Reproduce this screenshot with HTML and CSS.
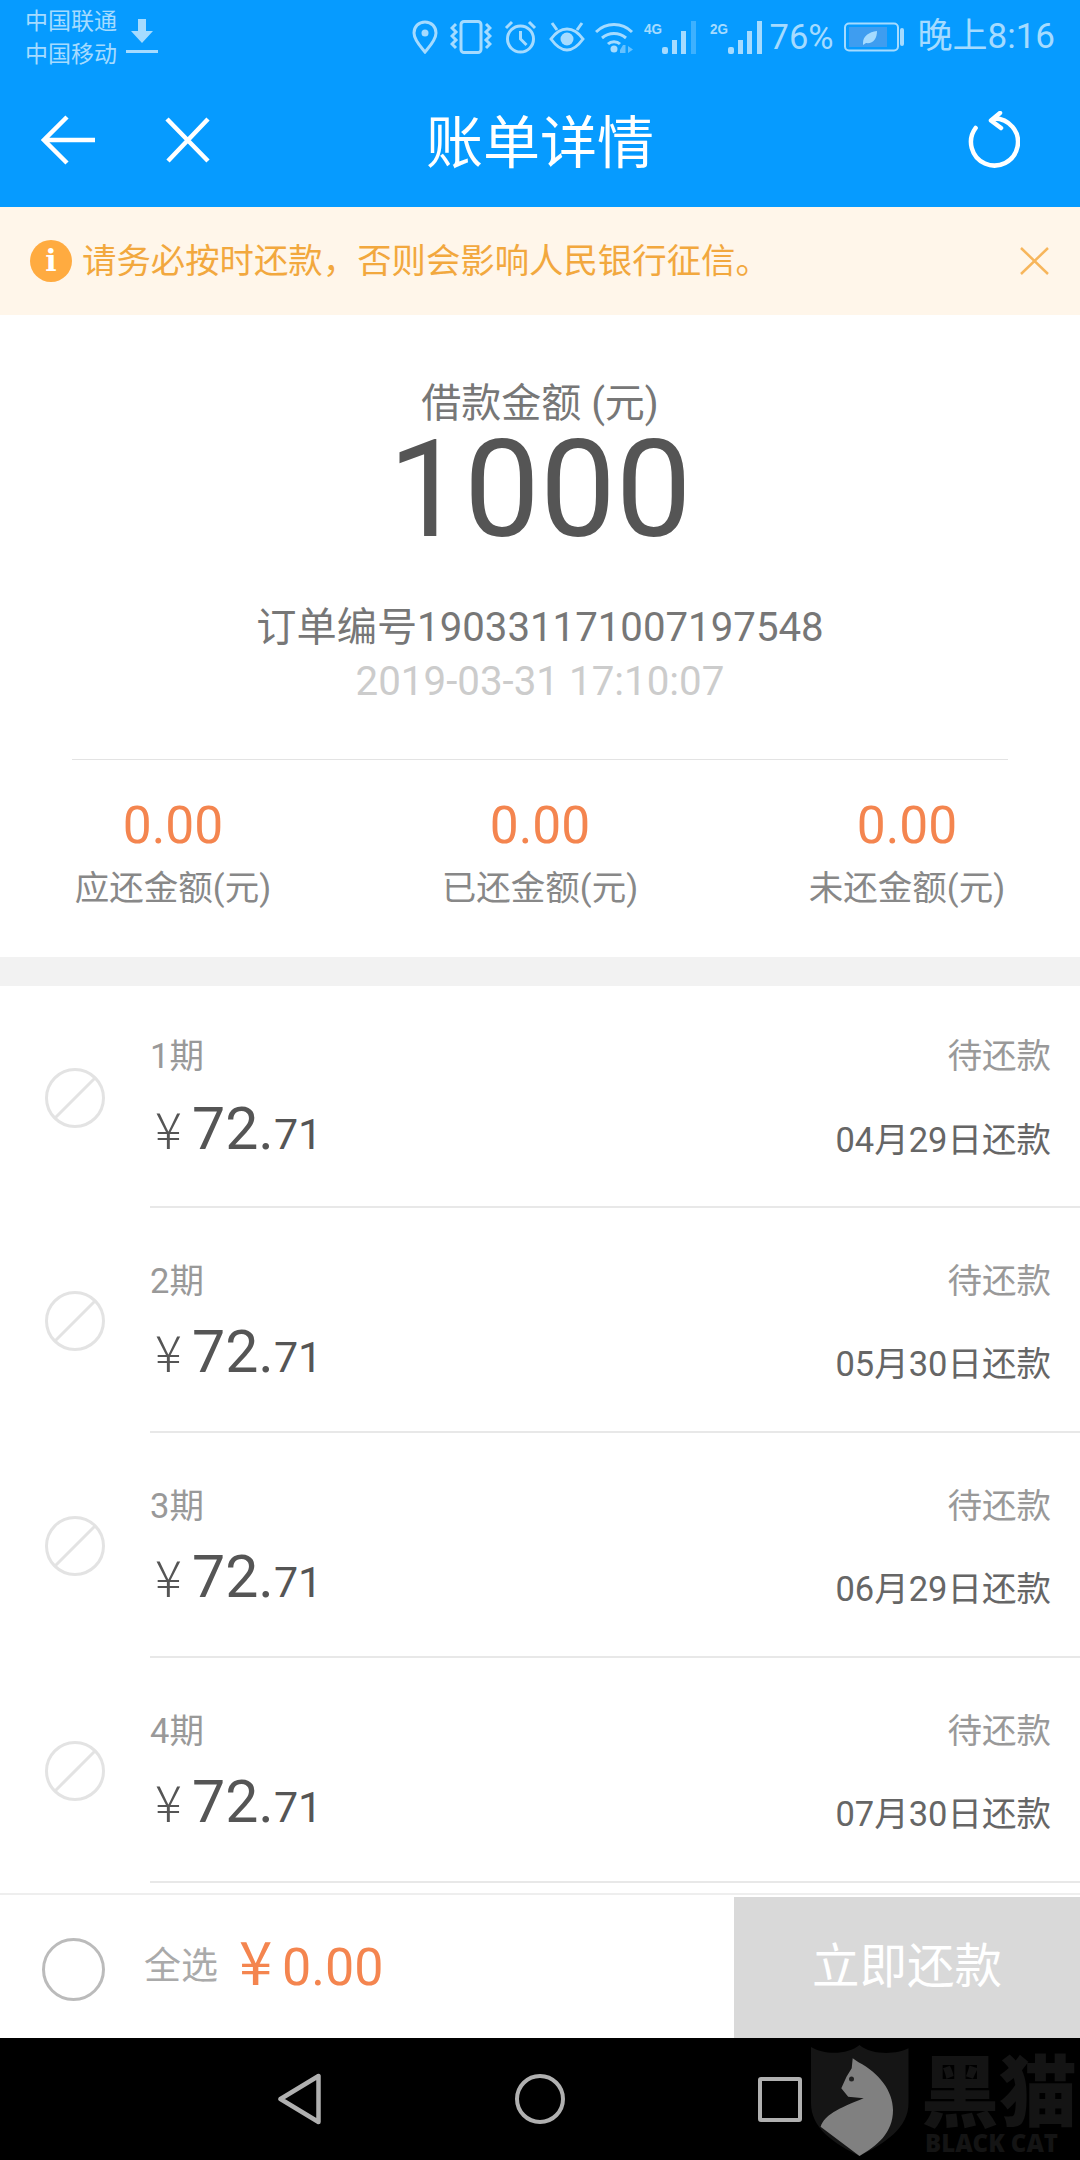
FILE: index.html
```html
<!DOCTYPE html>
<html lang="zh-CN">
<head>
<meta charset="utf-8">
<title>账单详情</title>
<link rel="stylesheet" href="styles.css">
</head>
<body>
<div class="page">
  <header class="top">
    <div class="status">
      <div class="carriers"><span>中国联通</span><span>中国移动</span></div>
      <svg class="ic-dl" viewBox="0 0 32 36"><path class="fill" d="M12 0h8v12h7L16 24 5 12h7z"/><rect class="fill" x="0" y="31" width="32" height="3"/></svg>
      <div class="status-right">
        <svg class="ic-pin" viewBox="0 0 26 34"><path class="line" d="M13 2C6.500 2 2 6.800 2 13c0 7 7 14 11 19 4-5 11-12 11-19C24 6.800 19.500 2 13 2z"/><circle class="fill" cx="13" cy="13" r="3.500"/></svg>
        <svg class="ic-vib" viewBox="0 0 42 34"><rect class="line" x="11" y="1.500" width="20" height="31" rx="3"/><path class="line" d="M6 4L2 8l4 4-4 4 4 4-4 4 4 4M36 4l4 4-4 4 4 4-4 4 4 4-4 4"/></svg>
        <svg class="ic-alarm" viewBox="0 0 33 34"><circle class="line" cx="16.500" cy="19" r="13"/><path class="line" d="M16.500 11v8l6 6M2 8l6-6M31 8l-6-6"/></svg>
        <svg class="ic-eye" viewBox="0 0 36 32"><path class="line" d="M2 18c5-7 10-10 16-10s11 3 16 10c-5 7-10 11-16 11S7 25 2 18z"/><circle class="fill" cx="18" cy="18" r="6.500"/><path class="line" d="M3 2l5 7M33 2l-5 7"/></svg>
        <svg class="ic-wifi" viewBox="0 0 39 32"><path class="line" d="M1 11c10-10 26-10 36 0M7 17c7-6 17-6 24 0M13 23c3-3 9-3 12 0"/><circle class="fill" cx="19" cy="28" r="3.500"/><path class="fill" d="M28 24h2.500v8H25v-3zM33 25l5 3.500-5 3.500z" opacity="0.6"/></svg>
        <svg class="ic-sig" viewBox="0 0 53 34"><text class="sig-label" x="0" y="14" textLength="18" lengthAdjust="spacingAndGlyphs">4G</text><rect class="fill" x="18" y="27" width="6" height="7" rx="2"/><rect class="fill" x="28" y="20" width="5" height="14"/><rect class="fill" x="37" y="11" width="5" height="23"/><rect class="fill dim" x="47" y="1" width="5" height="33"/></svg>
        <svg class="ic-sig" viewBox="0 0 53 34"><text class="sig-label" x="0" y="14" textLength="18" lengthAdjust="spacingAndGlyphs">2G</text><rect class="fill" x="18" y="27" width="6" height="7" rx="2"/><rect class="fill" x="28" y="20" width="5" height="14"/><rect class="fill" x="37" y="11" width="5" height="23"/><rect class="fill" x="47" y="1" width="5" height="33"/></svg>
        <span class="pct">76%</span>
        <svg class="ic-bat" viewBox="0 0 60 30"><rect class="line thin" x="1" y="1.500" width="53" height="27" rx="4"/><rect class="bat-level" x="5" y="5" width="38" height="20"/><path class="fill" d="M19 21c0-7 6-11 14-12 0 8-4 13-11 12l-3 2z"/><rect class="fill" x="56" y="6" width="4" height="18" rx="2"/></svg>
        <span class="clock">晚上8:16</span>
      </div>
    </div>
    <div class="toolbar">
      <div class="tool-left">
        <svg class="ic-back" viewBox="0 0 54 50"><path d="M54 25H3M26 2L3 25l23 23"/></svg>
        <svg class="ic-close" viewBox="0 0 45 46"><path d="M2 2l41 42M43 2L3 44"/></svg>
      </div>
      <h1 class="title">账单详情</h1>
      <div class="tool-right">
        <svg class="ic-reload" viewBox="0 0 52 58"><path d="M7.600 17A23.500 23.500 0 1 0 26 7.500M32 2l-9 7.500L33 17"/></svg>
      </div>
    </div>
  </header>

  <div class="notice">
    <span class="notice-dot">i</span>
    <span class="notice-text">请务必按时还款，否则会影响人民银行征信。</span>
    <svg class="ic-nclose" viewBox="0 0 29 28"><path d="M1 1l27 26M28 1L1 27"/></svg>
  </div>

  <section class="summary">
    <div class="sum-label">借款金额 (元)</div>
    <div class="sum-amount">1000</div>
    <div class="sum-order">订单编号190331171007197548</div>
    <div class="sum-date">2019-03-31 17:10:07</div>
    <div class="sum-rule"></div>
    <div class="stats">
      <div class="stat"><div class="stat-val">0.00</div><div class="stat-label">应还金额(元)</div></div>
      <div class="stat"><div class="stat-val">0.00</div><div class="stat-label">已还金额(元)</div></div>
      <div class="stat"><div class="stat-val">0.00</div><div class="stat-label">未还金额(元)</div></div>
    </div>
  </section>

  <div class="band"></div>

  <section class="list">
    <article class="row">
      <svg class="ic-ban" viewBox="0 0 60 60"><circle cx="30" cy="30" r="28.500"/><path d="M10 50L50 10"/></svg>
      <div class="row-body">
        <div class="col"><div class="period">1期</div><div class="amount"><span class="yen">¥</span>72.<span class="cents">71</span></div></div>
        <div class="col col-r"><div class="state">待还款</div><div class="due">04月29日还款</div></div>
      </div>
    </article>
    <article class="row">
      <svg class="ic-ban" viewBox="0 0 60 60"><circle cx="30" cy="30" r="28.500"/><path d="M10 50L50 10"/></svg>
      <div class="row-body">
        <div class="col"><div class="period">2期</div><div class="amount"><span class="yen">¥</span>72.<span class="cents">71</span></div></div>
        <div class="col col-r"><div class="state">待还款</div><div class="due">05月30日还款</div></div>
      </div>
    </article>
    <article class="row">
      <svg class="ic-ban" viewBox="0 0 60 60"><circle cx="30" cy="30" r="28.500"/><path d="M10 50L50 10"/></svg>
      <div class="row-body">
        <div class="col"><div class="period">3期</div><div class="amount"><span class="yen">¥</span>72.<span class="cents">71</span></div></div>
        <div class="col col-r"><div class="state">待还款</div><div class="due">06月29日还款</div></div>
      </div>
    </article>
    <article class="row">
      <svg class="ic-ban" viewBox="0 0 60 60"><circle cx="30" cy="30" r="28.500"/><path d="M10 50L50 10"/></svg>
      <div class="row-body">
        <div class="col"><div class="period">4期</div><div class="amount"><span class="yen">¥</span>72.<span class="cents">71</span></div></div>
        <div class="col col-r"><div class="state">待还款</div><div class="due">07月30日还款</div></div>
      </div>
    </article>
  </section>

  <footer class="bar">
    <span class="radio"></span>
    <span class="all">全选</span>
    <span class="total"><span class="total-yen">¥</span>0.00</span>
    <button class="pay">立即还款</button>
  </footer>

  <nav class="sysnav">
    <svg class="ic-tri" viewBox="0 0 44 52"><path d="M2.500 26L40.500 3v46z"/></svg>
    <span class="nav-circle"></span>
    <span class="nav-square"></span>
    <div class="mark">
      <svg class="mark-shield" viewBox="0 0 100 115"><path class="shield" d="M2 4C15 12 39 12 50.500 2 62 12 87 12 99.500 5.300V60c0 25-23 40-49 53C24 100 2 85 2 60z"/><path class="cat" d="M43.700 15.300l5.800 4C70 30 84 48 84 67c0 23-16 36-33.500 46L11.600 83.700C16 72 28 66 54.700 55.300l-15.500-1.600-6.900-8.400 5.200-11.600 5.200-8.400z"/><circle class="cat-eye" cx="42.500" cy="36" r="2.500"/></svg>
      <div class="mark-text"><span class="mark-cn">黑猫</span><span class="mark-en">BLACK CAT</span></div>
    </div>
  </nav>
</div>
</body>
</html>
```

FILE: styles.css
```css
* { box-sizing: border-box; }
html, body { margin: 0; padding: 0; background: #fff; }
body { font-family: Roboto, "Noto Sans CJK SC", sans-serif; }
.page { width: 1080px; height: 2160px; display: flex; flex-direction: column; overflow: hidden; }

/* top */
.top { background: #069bff; height: 207px; flex: none; display: flex; flex-direction: column; }
.status { height: 73px; display: flex; align-items: flex-start; padding: 5px 0 0 25px; color: #a5dbff; }
.carriers { display: flex; flex-direction: column; font-size: 23px; line-height: 33px; width: 101px; white-space: nowrap; }
.fill { fill: #a5dbff; }
.fill.dim { opacity: .35; }
.line { fill: none; stroke: #a5dbff; stroke-width: 3; }
.line.thin { stroke-width: 2; }
.ic-dl { width: 32px; height: 36px; margin: 14px 0 0 0; }
.status-right { margin-left: auto; display: flex; align-items: center; height: 64px; padding-right: 25px; }
.status-right svg { display: block; flex: none; }
.ic-pin { width: 26px; height: 34px; }
.ic-vib { width: 42px; height: 34px; margin-left: 12px; }
.ic-alarm { width: 33px; height: 34px; margin-left: 12px; }
.ic-eye { width: 36px; height: 32px; margin-left: 12px; }
.ic-wifi { width: 39px; height: 32px; margin-left: 10px; }
.ic-sig { width: 53px; height: 34px; margin-left: 10px; }
.ic-sig + .ic-sig { margin-left: 13px; }
.sig-label { font-family: "Liberation Sans", sans-serif; font-size: 15px; font-weight: 700; fill: #a5dbff; }
.pct { font-size: 34.500px; line-height: 40px; margin-left: 7px; width: 63px; white-space: nowrap; }
.ic-bat { width: 60px; height: 30px; margin-left: 11px; }
.bat-level { fill: #3e9df0; }
.clock { font-size: 35px; line-height: 40px; margin-left: 14px; white-space: nowrap; }

.toolbar { height: 134px; display: grid; grid-template-columns: 1fr auto 1fr; align-items: center; padding: 0 60px 0 41px; }
.tool-left { display: flex; align-items: center; gap: 70px; }
.tool-right { display: flex; justify-content: flex-end; }
.ic-back { width: 54px; height: 50px; }
.ic-back path, .ic-close path, .ic-reload path { fill: none; stroke: #fff; stroke-width: 4.500; }
.ic-close { width: 45px; height: 46px; }
.ic-reload { width: 52px; height: 58px; }
.ic-reload path { stroke-linecap: round; stroke-linejoin: round; }
.title { margin: 7px 0 0 19px; font-size: 57px; line-height: 70px; font-weight: 400; color: #fff; white-space: nowrap; }

/* notice */
.notice { height: 108px; flex: none; background: #fff6ea; display: flex; align-items: center; padding: 0 31px 0 30px; }
.notice-dot { width: 42px; height: 42px; border-radius: 50%; background: #ffab40; color: #fff; font-family: "DejaVu Serif", serif; font-weight: 700; font-size: 30px; line-height: 42px; text-align: center; flex: none; }
.notice-text { margin-left: 10px; font-size: 34.400px; line-height: 44px; color: #f2a83e; white-space: nowrap; }
.ic-nclose { width: 29px; height: 28px; margin-left: auto; }
.ic-nclose path { fill: none; stroke: #f7b65c; stroke-width: 2.500; }

/* summary */
.summary { height: 642px; flex: none; padding-top: 61px; text-align: center; }
.sum-label { font-size: 40px; line-height: 56px; color: #777; }
.sum-amount { margin-top: 1px; font-size: 135px; line-height: 114px; color: #555; }
.sum-order { margin-top: 53px; font-size: 40.200px; line-height: 56px; color: #777; white-space: nowrap; }
.sum-date { font-size: 40.300px; line-height: 52px; color: #ccc; }
.sum-rule { margin: 51px 72px 0; height: 1px; background: #e3e3e3; }
.stats { display: grid; grid-template-columns: repeat(3, 367px); justify-content: center; padding-top: 36px; }
.stat-val { font-size: 51.500px; line-height: 60px; color: #f4854f; }
.stat-label { font-size: 34.500px; line-height: 65px; color: #888; white-space: nowrap; }

.band { height: 29px; flex: none; background: #f2f2f2; }

/* list */
.list { flex: 1; min-height: 0; overflow: hidden; background: #fff; }
.row { height: 225px; display: flex; align-items: flex-start; padding-left: 45px; }
.row:first-child { height: 222px; }
.ic-ban { width: 60px; height: 60px; margin-top: 83px; flex: none; }
.row:first-child .ic-ban { margin-top: 82px; }
.ic-ban circle, .ic-ban path { fill: none; stroke: #e3e3e3; stroke-width: 3; }
.row-body { flex: 1; margin-left: 45px; height: 100%; border-bottom: 2px solid #e8e8e8; display: flex; justify-content: space-between; padding: 48px 29px 0 0; }
.row:first-child .row-body { padding-top: 45px; }
.col-r { text-align: right; }
.period, .state { font-size: 34.500px; line-height: 50px; color: #999; white-space: nowrap; }
.amount { margin-top: 8px; font-size: 59px; line-height: 76px; color: #555; white-space: nowrap; }
.row:first-child .amount { margin-top: 10px; }
.yen { display: inline-block; width: 37px; margin-left: 5px; font-family: "Noto Sans CJK SC", sans-serif; font-size: 50px; font-weight: 300; line-height: 1; }
.cents { font-size: 43px; }
.due { margin-top: 33px; font-size: 34.500px; line-height: 50px; color: #666; white-space: nowrap; }
.row:first-child .due { margin-top: 34px; }

/* bottom bar */
.bar { height: 145px; flex: none; border-top: 2px solid #eee; display: flex; align-items: center; background: #fff; padding-left: 42px; }
.radio { width: 63px; height: 63px; margin-top: 6px; border: 3px solid #bbb; border-radius: 50%; flex: none; }
.all { margin-left: 39px; font-size: 37px; line-height: 50px; color: #aaa; }
.total { margin: -6px 0 0 21px; font-size: 52px; line-height: 60px; color: #f4854f; white-space: nowrap; }
.total-yen { font-family: "Noto Sans CJK SC", sans-serif; font-size: 60px; display: inline-block; width: 43px; line-height: 1; }
.pay { margin-left: auto; margin-top: 2px; width: 346px; align-self: stretch; border: 0; padding: 0 0 10px; background: #d9d9d9; color: #fff; font-family: inherit; font-size: 47.500px; }

/* system nav */
.sysnav { height: 122px; flex: none; background: #000; position: relative; display: flex; align-items: center; }
.ic-tri { position: absolute; left: 278px; top: 35px; width: 44px; height: 52px; }
.ic-tri path { fill: none; stroke: #b0b0b0; stroke-width: 4.500; stroke-linejoin: round; }
.nav-circle { position: absolute; left: 515px; top: 36px; width: 50px; height: 50px; border: 4px solid #b0b0b0; border-radius: 50%; }
.nav-square { position: absolute; left: 758px; top: 39px; width: 44px; height: 45px; border: 4px solid #b0b0b0; border-radius: 3px; }
.mark { position: absolute; left: 809px; top: 5px; width: 271px; height: 115px; display: flex; }
.mark-shield { width: 100px; height: 115px; flex: none; }
.shield { fill: #151515; }
.cat { fill: #808080; }
.cat-eye { fill: #222; }
.mark-text { margin-left: 12px; display: flex; flex-direction: column; width: 159px; }
.mark-cn { font-family: "Noto Sans CJK SC", sans-serif; font-weight: 900; font-size: 78px; line-height: 76px; margin-top: 6px; color: #141414; white-space: nowrap; }
.mark-en { font-family: "Open Sans", sans-serif; font-weight: 800; font-size: 24px; line-height: 26px; margin: 5px 0 0 4px; color: #141414; white-space: nowrap; }
```
